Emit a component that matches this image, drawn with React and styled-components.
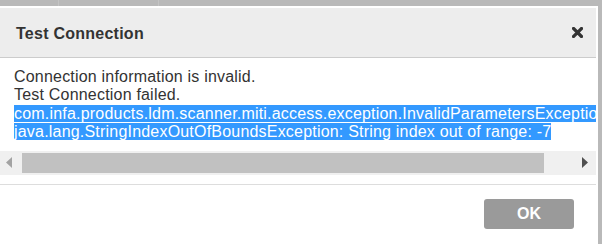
import styled, { createGlobalStyle } from 'styled-components';

const GlobalStyle = createGlobalStyle`
  html, body {
    margin: 0;
    padding: 0;
  }
  body {
    background: #b9b9b9;
    font-family: "Liberation Sans", Arial, sans-serif;
    overflow: hidden;
  }
`;

const Page = styled.div`
  width: 602px;
  height: 244px;
  display: flex;
  flex-direction: column;
  overflow: hidden;
  background: #b9b9b9;
`;

/* the page behind the dialog, only a sliver shows */
const BackStrip = styled.div`
  height: 6px;
  display: flex;
  flex-shrink: 0;
`;

const BackCell = styled.div`
  width: ${({ $width }) => $width}px;
  border-right: 1px solid #c4c4c4;
`;

const Dialog = styled.div`
  flex: 1;
  min-height: 0;
  margin: 0 4px 0 -2px;
  padding: 2px;
  background: #ffffff;
  display: flex;
  flex-direction: column;
`;

const Header = styled.div`
  box-sizing: border-box;
  height: 50px;
  padding: 2px 13px 0 16px;
  display: flex;
  align-items: center;
  justify-content: space-between;
  background: #ededed;
  border-bottom: 1px solid #cccccc;
  flex-shrink: 0;
`;

const Title = styled.div`
  font-size: 16px;
  font-weight: bold;
  letter-spacing: 0.25px;
  color: #333333;
`;

const CloseButton = styled.button`
  background: none;
  border: none;
  padding: 0;
  margin-bottom: 3px;
  display: flex;
  cursor: pointer;
`;

const Message = styled.div`
  padding: 10px 0 0 14px;
  overflow: hidden;
  font-size: 16px;
  line-height: 18.4px;
  letter-spacing: 0.2px;
  color: #333333;
  white-space: nowrap;
  flex-shrink: 0;
`;

const Line = styled.div`
  white-space: nowrap;
`;

const Selected = styled.span`
  background: #3399ff;
  color: #ffffff;
`;

const ScrollBar = styled.div`
  margin-top: 9px;
  height: 24px;
  display: flex;
  align-items: center;
  background: #f0f0f0;
  flex-shrink: 0;
`;

const ScrollArrow = styled.div`
  width: ${({ $width }) => $width}px;
  height: 24px;
  padding-left: ${({ $pad }) => $pad}px;
  box-sizing: border-box;
  display: flex;
  align-items: center;
  flex-shrink: 0;
`;

const ScrollTrack = styled.div`
  flex: 1;
  height: 24px;
  display: flex;
  align-items: center;
`;

const ScrollThumb = styled.div`
  width: 522px;
  height: 20px;
  background: #c1c1c1;
`;

const Divider = styled.div`
  margin-top: 9px;
  height: 1px;
  background: #dddddd;
  flex-shrink: 0;
`;

const Footer = styled.div`
  display: flex;
  justify-content: flex-end;
  padding: 14px 22px 0 0;
`;

const OkButton = styled.button`
  width: 90px;
  height: 30px;
  border: none;
  border-radius: 3px;
  background: #9a9a9a;
  color: #ffffff;
  font-family: "Liberation Sans", Arial, sans-serif;
  font-size: 16px;
  font-weight: bold;
  cursor: pointer;
`;

const CloseIcon = () => (
  <svg width="11" height="11" viewBox="0 0 11 11">
    <path d="M1.5 1.5 L9.5 9.5 M9.5 1.5 L1.5 9.5" stroke="#333333" strokeWidth="3.2" strokeLinecap="square" />
  </svg>
);

const ArrowLeft = () => (
  <svg width="6" height="11" viewBox="0 0 6 11">
    <path d="M6 0 L0 5.5 L6 11 Z" fill="#a3a3a3" />
  </svg>
);

const ArrowRight = () => (
  <svg width="6" height="11" viewBox="0 0 6 11">
    <path d="M0 0 L6 5.5 L0 11 Z" fill="#505050" />
  </svg>
);

const App = () => (
  <>
    <GlobalStyle />
    <Page>
      <BackStrip>
        <BackCell $width={58} />
        <BackCell $width={99} />
      </BackStrip>
      <Dialog>
        <Header>
          <Title>Test Connection</Title>
          <CloseButton type="button">
            <CloseIcon />
          </CloseButton>
        </Header>
        <Message>
          <Line>Connection information is invalid.</Line>
          <Line>Test Connection failed.</Line>
          <Line>
            <Selected>com.infa.products.ldm.scanner.miti.access.exception.InvalidParametersException:</Selected>
          </Line>
          <Line>
            <Selected>java.lang.StringIndexOutOfBoundsException: String index out of range: -7</Selected>
          </Line>
        </Message>
        <ScrollBar>
          <ScrollArrow $width={22} $pad={6}>
            <ArrowLeft />
          </ScrollArrow>
          <ScrollTrack>
            <ScrollThumb />
          </ScrollTrack>
          <ScrollArrow $width={20} $pad={6}>
            <ArrowRight />
          </ScrollArrow>
        </ScrollBar>
        <Divider />
        <Footer>
          <OkButton type="button">OK</OkButton>
        </Footer>
      </Dialog>
    </Page>
  </>
);

export default App;
